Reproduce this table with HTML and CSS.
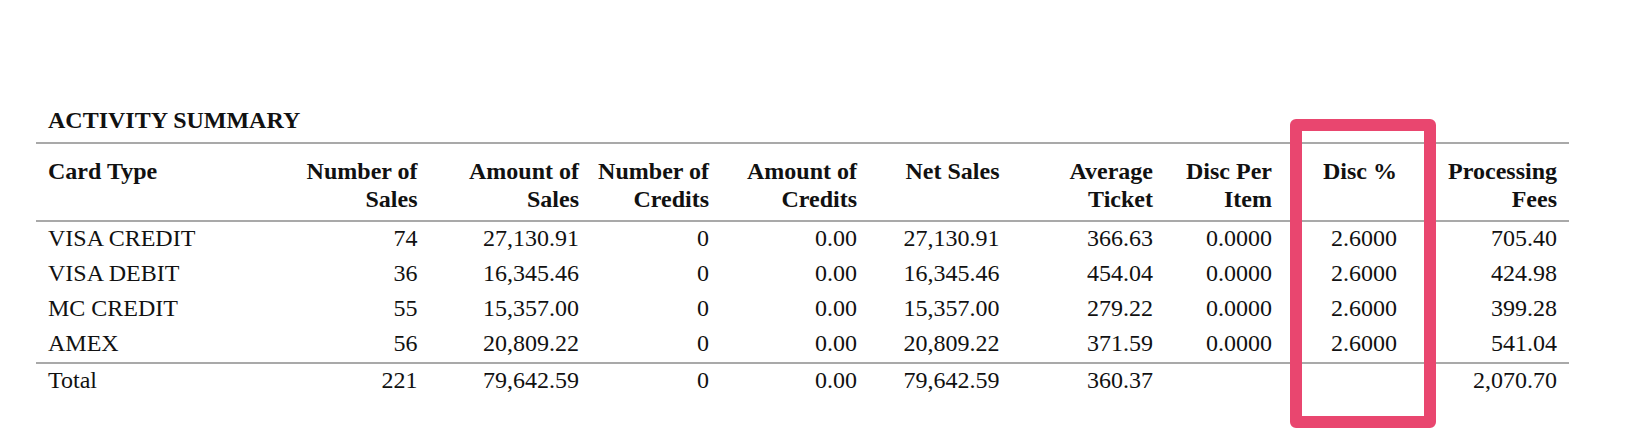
FILE: index.html
```html
<!DOCTYPE html>
<html lang="en">
<head>
<meta charset="utf-8">
<title>Activity Summary</title>
<link rel="stylesheet" href="styles.css">
</head>
<body>
<div class="page">
  <h2 class="title">ACTIVITY SUMMARY</h2>
  <table class="summary">
    <colgroup>
      <col class="c1"><col class="c2"><col class="c3"><col class="c4"><col class="c5">
      <col class="c6"><col class="c7"><col class="c8"><col class="c9"><col class="c10">
    </colgroup>
    <thead>
      <tr>
        <th class="left">Card Type</th>
        <th>Number of<br>Sales</th>
        <th>Amount of<br>Sales</th>
        <th>Number of<br>Credits</th>
        <th>Amount of<br>Credits</th>
        <th>Net Sales</th>
        <th>Average<br>Ticket</th>
        <th>Disc Per<br>Item</th>
        <th>Disc %</th>
        <th>Processing<br>Fees</th>
      </tr>
    </thead>
    <tbody>
      <tr>
        <td class="left">VISA CREDIT</td><td>74</td><td>27,130.91</td><td>0</td><td>0.00</td>
        <td>27,130.91</td><td>366.63</td><td>0.0000</td><td>2.6000</td><td>705.40</td>
      </tr>
      <tr>
        <td class="left">VISA DEBIT</td><td>36</td><td>16,345.46</td><td>0</td><td>0.00</td>
        <td>16,345.46</td><td>454.04</td><td>0.0000</td><td>2.6000</td><td>424.98</td>
      </tr>
      <tr>
        <td class="left">MC CREDIT</td><td>55</td><td>15,357.00</td><td>0</td><td>0.00</td>
        <td>15,357.00</td><td>279.22</td><td>0.0000</td><td>2.6000</td><td>399.28</td>
      </tr>
      <tr class="last">
        <td class="left">AMEX</td><td>56</td><td>20,809.22</td><td>0</td><td>0.00</td>
        <td>20,809.22</td><td>371.59</td><td>0.0000</td><td>2.6000</td><td>541.04</td>
      </tr>
    </tbody>
    <tfoot>
      <tr>
        <td class="left">Total</td><td>221</td><td>79,642.59</td><td>0</td><td>0.00</td>
        <td>79,642.59</td><td>360.37</td><td></td><td></td><td>2,070.70</td>
      </tr>
    </tfoot>
  </table>
  <div class="highlight" aria-hidden="true"></div>
</div>
</body>
</html>
```

FILE: styles.css
```css
html, body {
  margin: 0;
  padding: 0;
  background: #ffffff;
}

.page {
  position: relative;
  box-sizing: border-box;
  min-height: 436px;
  padding: 106px 0 0 36px;
  font-family: "Liberation Serif", "Times New Roman", serif;
  color: #111111;
}

.title {
  margin: 0 0 8px 0;
  padding-left: 12px;
  font-size: 24px;
  line-height: 28px;
  font-weight: bold;
}

.summary {
  width: 1533px;
  table-layout: fixed;
  border-collapse: separate;
  border-spacing: 0;
  font-size: 24px;
}

.c1 { width: 254px; }
.c2 { width: 139.5px; }
.c3 { width: 161.5px; }
.c4 { width: 130px; }
.c5 { width: 148px; }
.c6 { width: 142.5px; }
.c7 { width: 153.5px; }
.c8 { width: 119px; }
.c9 { width: 125px; }
.c10 { width: 160px; }

.summary th,
.summary td {
  text-align: right;
  white-space: nowrap;
  padding-left: 0;
  padding-right: 12px;
}

.summary .left {
  text-align: left;
  padding-left: 12px;
  padding-right: 0;
}

.summary th {
  font-weight: bold;
  vertical-align: top;
  line-height: 28px;
  padding-top: 13px;
  padding-bottom: 7px;
  border-top: 2px solid #a9a9a9;
  border-bottom: 2px solid #a9a9a9;
}

.summary td {
  font-weight: normal;
  line-height: 26px;
  padding-top: 3px;
  padding-bottom: 6px;
}

.summary tr.last td {
  border-bottom: 2px solid #a9a9a9;
}

.highlight {
  position: absolute;
  left: 1290px;
  top: 119px;
  width: 146px;
  height: 309px;
  box-sizing: border-box;
  border: 12.5px solid #e9466f;
  border-radius: 6px;
}
```
